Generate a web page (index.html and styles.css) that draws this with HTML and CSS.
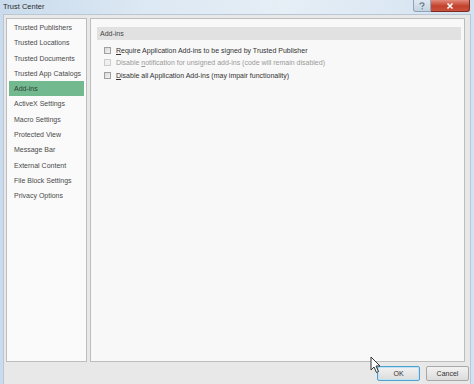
FILE: index.html
```html
<!DOCTYPE html>
<html>
<head>
<meta charset="utf-8">
<link rel="stylesheet" href="styles.css">
</head>
<body>
<div class="window">
  <div class="titlebar">
    <span class="title">Trust Center</span>
    <div class="caption-btns">
      <div class="cap-help"><svg width="8" height="8" viewBox="0 0 8 8"><path d="M2 2.5 Q2 0.8 4 0.8 Q6 0.8 6 2.4 Q6 3.5 4.5 4 L4.2 5.2" fill="none" stroke="#6a7a88" stroke-width="1.2"/><rect x="3.6" y="6.2" width="1.2" height="1.2" fill="#6a7a88"/></svg></div>
      <div class="cap-close"><svg width="8" height="8" viewBox="0 0 8 8"><path d="M1.5 1.5 L6.5 6.5 M6.5 1.5 L1.5 6.5" stroke="#fff" stroke-width="1.6"/></svg></div>
    </div>
  </div>
  <div class="client">
    <div class="main">
      <ul class="nav">
        <li>Trusted Publishers</li>
        <li>Trusted Locations</li>
        <li>Trusted Documents</li>
        <li>Trusted App Catalogs</li>
        <li class="active">Add-ins</li>
        <li>ActiveX Settings</li>
        <li>Macro Settings</li>
        <li>Protected View</li>
        <li>Message Bar</li>
        <li>External Content</li>
        <li>File Block Settings</li>
        <li>Privacy Options</li>
      </ul>
      <div class="content">
        <div class="section-head">Add-ins</div>
        <div class="opts">
          <div class="opt"><span class="cb"></span><span><u>R</u>equire Application Add-ins to be signed by Trusted Publisher</span></div>
          <div class="opt disabled"><span class="cb"></span><span>Disable <u>n</u>otification for unsigned add-ins (code will remain disabled)</span></div>
          <div class="opt"><span class="cb"></span><span><u>D</u>isable all Application Add-ins (may impair functionality)</span></div>
        </div>
      </div>
    </div>
    <div class="footer">
      <button class="btn default">OK</button>
      <button class="btn">Cancel</button>
    </div>
  </div>
  <svg class="cursor" width="12" height="18" viewBox="0 0 12 18"><path d="M1 1 L1 14 L4 11 L6.5 16.5 L8.5 15.5 L6 10 L10 10 Z" fill="#fff" stroke="#333" stroke-width="1"/></svg>
</div>
</body>
</html>
```

FILE: styles.css
```css
* { box-sizing: border-box; }
html, body { margin: 0; padding: 0; }
body {
  width: 474px;
  height: 384px;
  overflow: hidden;
  font-family: "Liberation Sans", Arial, sans-serif;
  font-size: 7px;
  color: #3a3a3a;
  background: #e9e9e9;
}
.window {
  position: relative;
  width: 474px;
  height: 384px;
  display: flex;
  flex-direction: column;
  background: linear-gradient(90deg, #c9dbec 0, #dce8f3 30%, #e6eef6 60%, #d4e3f1 100%);
}
.titlebar {
  height: 14px;
  display: flex;
  align-items: flex-start;
  justify-content: space-between;
  padding-left: 3px;
}
.title {
  margin-top: 2px;
  font-size: 7.5px;
  color: #2a2a2a;
}
.caption-btns {
  display: flex;
  margin-right: 4px;
}
.cap-help {
  width: 18px;
  height: 12px;
  display: flex;
  align-items: center;
  justify-content: center;
  background: linear-gradient(#dfe8f1, #c5d3e1);
  border: 1px solid #8ea3b8;
  border-top: none;
  border-radius: 0 0 0 3px;
}
.cap-close {
  width: 39px;
  height: 12px;
  display: flex;
  align-items: center;
  justify-content: center;
  background: linear-gradient(#e28a7c, #c2412c 55%, #c9523d);
  border: 1px solid #7e2a20;
  border-top: none;
  border-left: none;
  border-radius: 0 0 3px 0;
}
.client {
  flex: 1;
  margin: 0 3px 0 3px;
  background: #e8e8e8;
  border: 1px solid #b9c6d3;
  border-bottom: none;
  display: flex;
  flex-direction: column;
}
.main {
  flex: 1;
  display: flex;
  gap: 3px;
  padding: 3px 5px 0 2px;
}
.nav {
  list-style: none;
  margin: 0;
  padding: 1px 2px;
  width: 81px;
  background: #fafafa;
  border: 1px solid #bdbdbd;
}
.nav li {
  height: 15.3px;
  line-height: 15.3px;
  padding-left: 5px;
  white-space: nowrap;
  color: #4a4a4a;
}
.nav li.active {
  background: #72b98f;
  color: #2f3f35;
}
.content {
  flex: 1;
  background: #f8f8f8;
  border: 1px solid #bdbdbd;
  padding: 8px 3px 0 6px;
}
.section-head {
  height: 13px;
  line-height: 13px;
  background: #e1e1e1;
  padding-left: 3px;
  color: #444;
}
.opts {
  padding: 5.5px 0 0 7px;
  display: flex;
  flex-direction: column;
  gap: 2.3px;
}
.opt {
  display: flex;
  align-items: center;
  gap: 5px;
  height: 10px;
  white-space: nowrap;
  color: #333;
}
.opt.disabled { color: #9a9a9a; }
.cb {
  width: 7px;
  height: 7px;
  border: 1px solid #a0a0a0;
  background: linear-gradient(135deg, #d8d8d8, #f4f4f4);
  flex: none;
}
.opt.disabled .cb { border-color: #cdcdcd; background: #f0f0f0; }
.footer {
  height: 22px;
  display: flex;
  justify-content: flex-end;
  align-items: center;
  gap: 6px;
  padding-right: 1px;
}
.btn {
  width: 43px;
  height: 15px;
  font-family: inherit;
  font-size: 7px;
  color: #333;
  background: linear-gradient(#f2f2f2, #dcdcdc);
  border: 1px solid #a8a8a8;
  border-radius: 2px;
  padding: 0;
}
.btn.default {
  border-color: #4f9fcf;
  box-shadow: inset 0 0 0 1px #bfe3f5;
}
.cursor {
  position: absolute;
  left: 370px;
  top: 356px;
}
```
